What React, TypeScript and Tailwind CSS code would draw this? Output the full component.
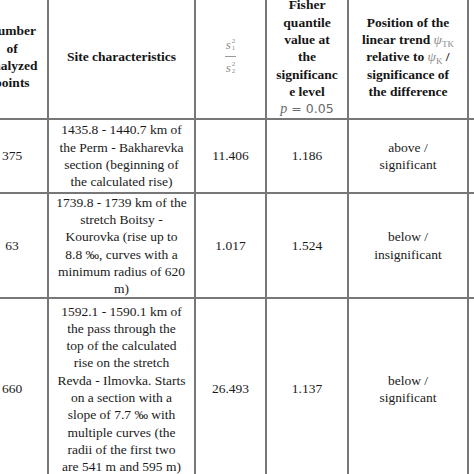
import React from "react";

const Lines = ({ lines }: { lines: React.ReactNode[] }) => (
  <>
    {lines.map((l, i) => (
      <span key={i} className="block whitespace-nowrap h-[17.3px]">
        {l}
      </span>
    ))}
  </>
);

const Cell = ({
  children,
  bold,
}: {
  children?: React.ReactNode;
  bold?: boolean;
}) => (
  <div
    className={
      "bg-white flex flex-col items-center justify-center text-center overflow-visible " +
      (bold ? "font-bold text-[#151515]" : "text-[#1a1a1a]")
    }
  >
    {children}
  </div>
);

const Psi = ({ sub }: { sub: string }) => (
  <span className="font-normal text-[#8a8a8a] italic leading-[0]">
    ψ<span className="not-italic text-[9px] leading-[0] relative top-[3px]">{sub}</span>
  </span>
);

const S = ({ n }: { n: string }) => (
  <span className="inline-flex items-center leading-none">
    <span className="italic text-[13px]">s</span>
    <span className="inline-flex flex-col text-[7px] leading-[7px] ml-px">
      <span>2</span>
      <span>{n}</span>
    </span>
  </span>
);

export default function App() {
  return (
    <div className="w-[474px] h-[474px] overflow-hidden bg-white font-['Liberation_Serif',serif] text-[13.5px] leading-[17.3px]">
      <div className="grid w-max ml-[-23px] mt-[-4px] gap-[2px] bg-[#777777] grid-cols-[70px_145px_69px_80px_118px_40px] grid-rows-[122px_72px_103px_180px]">
        {/* header */}
        <Cell bold>
          <Lines lines={["Number", "of", "analyzed", "points"]} />
        </Cell>
        <Cell bold>
          <Lines lines={["Site characteristics"]} />
        </Cell>
        <Cell>
          <div className="flex flex-col items-center text-[#8a8a8a] mt-[-2px]">
            <S n="1" />
            <span className="block w-[11px] h-px bg-[#9a9a9a] my-[4px]" />
            <S n="2" />
          </div>
        </Cell>
        <Cell bold>
          <Lines
            lines={[
              "Fisher",
              "quantile",
              "value at",
              "the",
              "significanc",
              "e level",
              <span className="font-normal text-[#6a6a6a] font-['DejaVu_Sans',sans-serif] text-[12.5px]">
                <span className="italic font-['Liberation_Serif',serif] text-[14px]">p</span> = 0.05
              </span>,
            ]}
          />
        </Cell>
        <Cell bold>
          <Lines
            lines={[
              "Position of the",
              <>
                linear trend <Psi sub="TK" />
              </>,
              <>
                relative to <Psi sub="K" /> /
              </>,
              "significance of",
              "the difference",
            ]}
          />
        </Cell>
        <Cell />

        {/* row 1 */}
        <Cell>375</Cell>
        <Cell>
          <Lines
            lines={[
              "1435.8 - 1440.7 km of",
              "the Perm - Bakharevka",
              "section (beginning of",
              "the calculated rise)",
            ]}
          />
        </Cell>
        <Cell>11.406</Cell>
        <Cell>1.186</Cell>
        <Cell>
          <Lines lines={["above /", "significant"]} />
        </Cell>
        <Cell />

        {/* row 2 */}
        <Cell>63</Cell>
        <Cell>
          <Lines
            lines={[
              "1739.8 - 1739 km of the",
              "stretch Boitsy -",
              "Kourovka (rise up to",
              "8.8 ‰, curves with a",
              "minimum radius of 620",
              "m)",
            ]}
          />
        </Cell>
        <Cell>1.017</Cell>
        <Cell>1.524</Cell>
        <Cell>
          <Lines lines={["below /", "insignificant"]} />
        </Cell>
        <Cell />

        {/* row 3 */}
        <Cell>660</Cell>
        <Cell>
          <Lines
            lines={[
              "1592.1 - 1590.1 km of",
              "the pass through the",
              "top of the calculated",
              "rise on the stretch",
              "Revda - Ilmovka. Starts",
              "on a section with a",
              "slope of 7.7 ‰ with",
              "multiple curves (the",
              "radii of the first two",
              "are 541 m and 595 m)",
            ]}
          />
        </Cell>
        <Cell>26.493</Cell>
        <Cell>1.137</Cell>
        <Cell>
          <Lines lines={["below /", "significant"]} />
        </Cell>
        <Cell />
      </div>
    </div>
  );
}
